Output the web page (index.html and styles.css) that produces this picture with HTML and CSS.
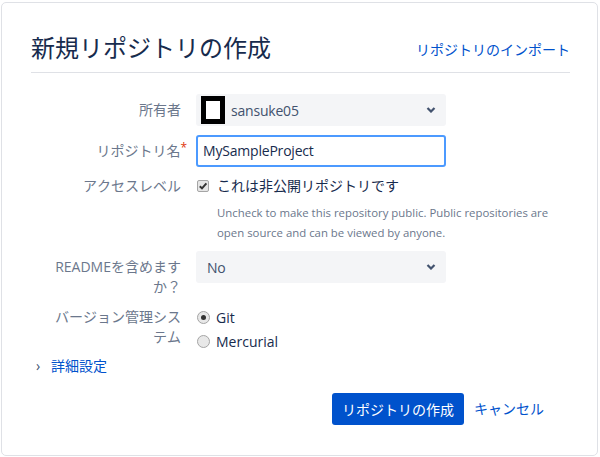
FILE: index.html
```html
<!DOCTYPE html>
<html lang="ja">
<head>
  <meta charset="UTF-8" />
  <title>新規リポジトリの作成</title>
  <link rel="stylesheet" href="styles.css">
</head>
<body>
  <div class="card">
    <div class="header">
      <h1>新規リポジトリの作成</h1>
      <a class="link import" href="#">リポジトリのインポート</a>
    </div>

    <form class="form">
      <div class="row first">
        <label class="label">所有者</label>
        <div class="select">
          <span class="avatar"></span>
          <span class="select-text">sansuke05</span>
          <svg class="chev" width="10" height="6" viewBox="0 0 10 6"><path d="M1.5 1 L5 4.5 L8.5 1" fill="none" stroke="#42526e" stroke-width="2.2"/></svg>
        </div>
      </div>

      <div class="row">
        <label class="label">リポジトリ名<span class="req">*</span></label>
        <div class="input">MySampleProject</div>
      </div>

      <div class="row">
        <label class="label label-top">アクセスレベル</label>
        <div>
          <div class="check-line">
            <span class="checkbox">
              <svg width="10" height="10" viewBox="0 0 10 10"><path d="M1.8 5.2 L4 7.4 L8.4 2.4" fill="none" stroke="#333" stroke-width="2"/></svg>
            </span>
            <span>これは非公開リポジトリです</span>
          </div>
          <p class="help">Uncheck to make this repository public. Public repositories are open source and can be viewed by anyone.</p>
        </div>
      </div>

      <div class="row">
        <label class="label">READMEを含めますか？</label>
        <div class="select">
          <span class="select-text no">No</span>
          <svg class="chev" width="10" height="6" viewBox="0 0 10 6"><path d="M1.5 1 L5 4.5 L8.5 1" fill="none" stroke="#42526e" stroke-width="2.2"/></svg>
        </div>
      </div>

      <div class="row last">
        <label class="label label-vcs">バージョン管理シス<br>テム</label>
        <div>
          <div class="radio-line"><span class="radio checked"></span>Git</div>
          <div class="radio-line"><span class="radio"></span>Mercurial</div>
        </div>
      </div>

      <a class="link advanced" href="#"><span class="caret">›</span>詳細設定</a>

      <div class="actions">
        <button class="btn" type="button">リポジトリの作成</button>
        <a class="link" href="#">キャンセル</a>
      </div>
    </form>
  </div>
</body>
</html>
```

FILE: styles.css
```css
body {
  margin: 0;
  font-family: "Open Sans", "Noto Sans CJK JP", sans-serif;
  font-size: 14px;
  font-kerning: none;
  color: #172b4d;
  background: #fff;
}
.card {
  margin: 2px 0 0 1px;
  width: 597px;
  height: 454px;
  box-sizing: border-box;
  border: 1px solid #dfe1e6;
  border-radius: 5px;
  padding: 0 27px 0 29px;
}
.header {
  display: flex;
  justify-content: space-between;
  align-items: flex-end;
  padding-top: 30px;
  padding-bottom: 9px;
  border-bottom: 1px solid #dfe1e6;
}
h1 {
  margin: 0;
  font-size: 24px;
  font-weight: normal;
  line-height: 30px;
}
.link {
  color: #0052cc;
  text-decoration: none;
  line-height: 20px;
}
.import {
  margin-bottom: 3px;
}
.form {
  margin-top: 21px;
}
.row {
  display: grid;
  grid-template-columns: 150px 1fr;
  column-gap: 15px;
  margin-bottom: 8px;
}
.row.first {
  margin-bottom: 9px;
}
.row.last {
  margin-bottom: 0;
}
.label {
  text-align: right;
  color: #6b778c;
  line-height: 20px;
  padding: 6px 0 0 23px;
}
.label-top {
  padding-top: 1px;
}
.label-vcs {
  padding-top: 2px;
}
.req {
  color: #de350b;
  font-size: 12px;
  vertical-align: top;
  line-height: 14px;
  margin-right: -6px;
}
.select {
  width: 250px;
  height: 32px;
  box-sizing: border-box;
  background: #f4f5f7;
  border-radius: 3px;
  display: flex;
  align-items: center;
  padding: 0 10px 0 5px;
  color: #42526e;
}
.avatar {
  width: 24px;
  height: 28px;
  box-sizing: border-box;
  border: 5px solid #000;
  background: #fff;
  margin-right: 6px;
}
.select-text {
  flex: 1;
  letter-spacing: -0.2px;
}
.select-text.no {
  padding-left: 6px;
}
.input {
  width: 250px;
  height: 32px;
  box-sizing: border-box;
  border: 2px solid #4c9aff;
  border-radius: 3px;
  padding: 0 5px;
  line-height: 28px;
  background: #fff;
  letter-spacing: -0.2px;
}
.check-line {
  display: flex;
  align-items: center;
  line-height: 20px;
  padding-top: 1px;
}
.checkbox {
  width: 12px;
  height: 12px;
  box-sizing: border-box;
  border: 1px solid #a5a5a5;
  border-radius: 2px;
  background: #e6e6e6;
  margin: 0 8px 0 1px;
  display: flex;
  align-items: center;
  justify-content: center;
}
.help {
  max-width: 345px;
  margin: 7px 0 0 21px;
  font-size: 11.4px;
  line-height: 20px;
  color: #6b778c;
}
.radio-line {
  display: flex;
  align-items: center;
  height: 24px;
}
.radio {
  width: 13px;
  height: 13px;
  box-sizing: border-box;
  border: 1px solid #a5a5a5;
  border-radius: 50%;
  background: #e8e8e8;
  margin: 0 6px 0 1px;
  position: relative;
}
.radio.checked::after {
  content: "";
  position: absolute;
  left: 3px;
  top: 3px;
  width: 5px;
  height: 5px;
  border-radius: 50%;
  background: #333;
}
.advanced {
  display: block;
  margin-top: 3px;
  padding-left: 5px;
}
.caret {
  display: inline-block;
  width: 15px;
  color: #42526e;
}
.actions {
  display: flex;
  justify-content: flex-end;
  align-items: center;
  gap: 10px;
  margin-top: 17px;
  padding-right: 26px;
}
.btn {
  height: 32px;
  padding: 0 10px;
  border: none;
  border-radius: 3px;
  background: #0052cc;
  color: #fff;
  font: inherit;
  cursor: pointer;
}
```
